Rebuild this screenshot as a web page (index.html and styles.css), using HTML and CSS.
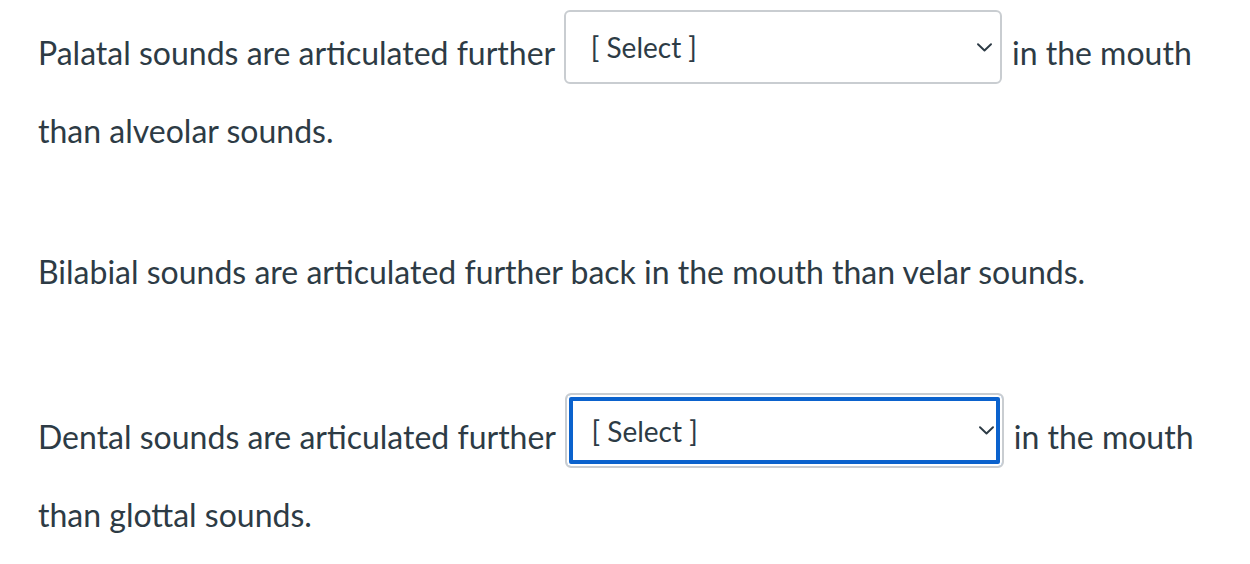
FILE: index.html
```html
<!DOCTYPE html>
<html lang="en">
<head>
<meta charset="utf-8">
<title>Quiz</title>
<link rel="stylesheet" href="styles.css">
</head>
<body>
<div class="quiz">
  <p class="stmt">Palatal sounds are articulated further <span class="select"><span class="select-label">[ Select ]</span><svg class="chev" width="15" height="9" viewBox="0 0 15 9"><path d="M1 1.2 L7.5 7.5 L14 1.2" fill="none" stroke="#2d3b45" stroke-width="1.9" stroke-linecap="round" stroke-linejoin="round"/></svg></span> in the mouth than alveolar sounds.</p>
  <p class="stmt">Bilabial sounds are articulated further back in the mouth than velar sounds.</p>
  <p class="stmt stmt-after">Dental sounds are articulated further <span class="select select-focus"><span class="select-label">[ Select ]</span><svg class="chev" width="15" height="9" viewBox="0 0 15 9"><path d="M1 1.2 L7.5 7.5 L14 1.2" fill="none" stroke="#2d3b45" stroke-width="1.9" stroke-linecap="round" stroke-linejoin="round"/></svg></span> in the mouth than glottal sounds.</p>
</div>
</body>
</html>
```
FILE: styles.css
```css
html, body {
  margin: 0;
  padding: 0;
  background: #ffffff;
}

.quiz {
  padding: 10px 0 0 38px;
  width: 1172px;
  font-family: Lato, "Open Sans", sans-serif;
  color: #2d3b45;
}

.stmt {
  margin: 0;
  font-size: 32px;
  line-height: 78px;
}

.stmt + .stmt {
  margin-top: 63px;
}

.stmt.stmt-after {
  margin-top: 82px;
}

.select {
  display: inline-flex;
  align-items: center;
  justify-content: space-between;
  box-sizing: border-box;
  width: 438px;
  height: 74px;
  margin: 0 2px 0 1px;
  padding: 2px 8px 0 25px;
  border: 2px solid #c9cdd1;
  border-radius: 6px;
  background: #ffffff;
  vertical-align: 7px;
  line-height: 1.2;
}

.select-focus {
  width: 439px;
  height: 75px;
  box-shadow: inset 0 0 0 2px #ffffff, inset 0 0 0 6px #0b62cd;
}

.select-label {
  font-size: 28px;
  color: #2d3b45;
}

.chev {
  display: block;
  margin-top: -2px;
}
```
